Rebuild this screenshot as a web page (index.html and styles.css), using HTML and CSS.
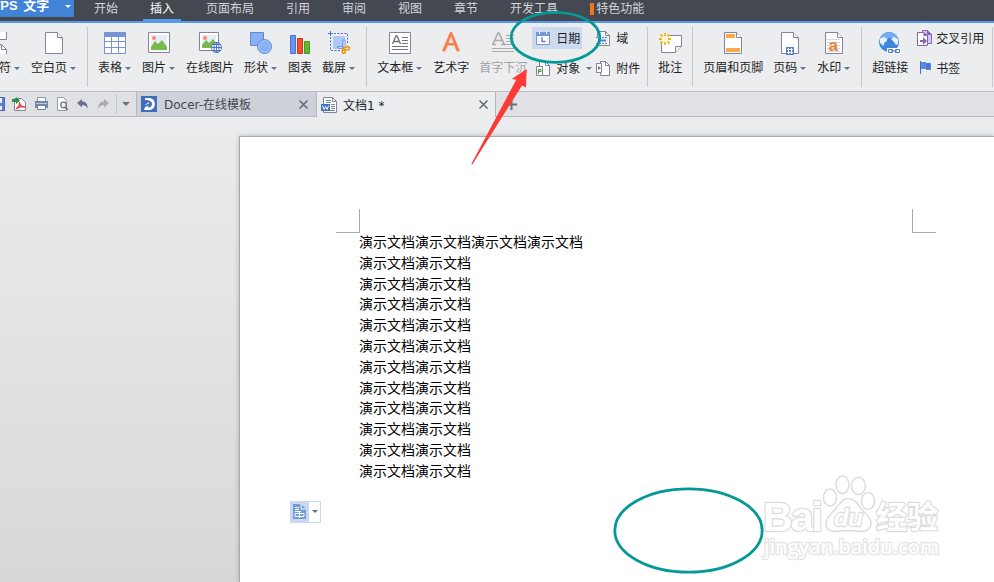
FILE: index.html
```html
<!DOCTYPE html>
<html lang="zh-CN">
<head>
  <meta charset="utf-8">
  <title>文档1 - WPS 文字</title>
  <link rel="stylesheet" href="styles.css">
</head>
<body>
<nav class="menu">
  <div class="app">WPS 文字<i class="caret"></i></div>
  <a>开始</a>
  <a class="active">插入</a>
  <a>页面布局</a>
  <a>引用</a>
  <a>审阅</a>
  <a>视图</a>
  <a>章节</a>
  <a>开发工具</a>
  <a class="special">特色功能</a>
</nav>

<div class="ribbon">
  <div class="btn">
    <svg width="22" height="22"><path d="M2.500 0v7.500h17V0M2.500 22V12.500h12l5 5V22" fill="#fff" stroke="#85829a"/><path d="M14.500 12.500v5h5" fill="none" stroke="#85829a"/></svg>
    <span>分隔符<i class="caret"></i></span>
  </div>
  <div class="btn">
    <svg width="18" height="22"><path d="M.5.5h12l5 5v16H.5z" fill="#fff" stroke="#85829a"/><path d="M12 1l5 9V6z" fill="#dfe5f6"/><path d="M12.500.5v5h5" fill="#fff" stroke="#85829a"/></svg>
    <span>空白页<i class="caret"></i></span>
  </div>
  <div class="sep"></div>
  <div class="btn">
    <svg width="22" height="22"><path d="M0 0h22v22H0z" fill="#7894d6"/><path d="M1 5h6v4H1zM8 5h6v4H8zM15 5h6v4h-6zM1 10h6v5H1zM8 10h6v5H8zM15 10h6v5h-6zM1 16h6v5H1zM8 16h6v5H8zM15 16h6v5h-6z" fill="#fff"/></svg>
    <span>表格<i class="caret"></i></span>
  </div>
  <div class="btn">
    <svg width="22" height="22"><path d="M.5.5h21v20H.5z" fill="#fff" stroke="#85829a"/><path d="M3 3h16v15H3z" fill="#e5edfb"/><circle cx="6" cy="6" r="2" fill="#fb8a62"/><path d="M3 18v-3l4-6 3 3 4-4 5 7v3z" fill="#76ba4c"/></svg>
    <span>图片<i class="caret"></i></span>
  </div>
  <div class="btn">
    <svg width="23" height="22"><path d="M.5.5h19v18H.5z" fill="#fff" stroke="#85829a"/><path d="M3 3h14v13H3z" fill="#e5edfb"/><circle cx="6" cy="6" r="2" fill="#fb8a62"/><path d="M3 16v-3l4-5 3 3 4-4 3 4v5z" fill="#76ba4c"/><circle cx="17.500" cy="15.500" r="5" fill="#fff" stroke="#4a74bf"/><path d="M12.500 15.500h10M17.500 10.500v10M13.500 12.500h8M13.500 18.500h8" stroke="#4a74bf"/><ellipse cx="17.500" cy="15.500" rx="2.500" ry="5" fill="none" stroke="#4a74bf"/></svg>
    <span>在线图片</span>
  </div>
  <div class="btn">
    <svg width="22" height="22"><path d="M.5.5h13v13H.5z" fill="#89b1f5" stroke="#5f87d2"/><circle cx="14.500" cy="14.500" r="7" fill="#89b1f5" stroke="#5f87d2"/><circle cx="14.500" cy="14.500" r="5.800" fill="none" stroke="#a9c7f9"/></svg>
    <span>形状<i class="caret"></i></span>
  </div>
  <div class="btn">
    <svg width="20" height="22"><path d="M.5 3.500h5v18h-5z" fill="#6896ef" stroke="#4b73cf"/><path d="M7.500 6.500h5v15h-5z" fill="#f3512c" stroke="#cd3717"/><path d="M14.500 9.500h5v12h-5z" fill="#5cbb2f" stroke="#429a1d"/></svg>
    <span>图表</span>
  </div>
  <div class="btn">
    <svg width="22" height="22"><path d="M5 4h12v13H5z" fill="#b0c8fb"/><path d="M2.500 5v13.500H12M6 1.500h13.500V12" fill="none" stroke="#4770c8" stroke-dasharray="2 1.500"/><path d="M0 1.500h5M2.500-1v5" stroke="#4770c8"/><path d="M15 8h2v8h-2zM9 15l6-.5 1 1.500-5 .5z" fill="#fff" stroke="#4a76d0" stroke-width=".8"/><path d="M15.500 16.500l4-2 2 1-.5 2-4.500.500zM15 17.500l2 1v2.500l-2 .5-1-2z" fill="#fff3d6" stroke="#e8930f" stroke-width="1.500"/></svg>
    <span>截屏<i class="caret"></i></span>
  </div>
  <div class="sep"></div>
  <div class="btn">
    <svg width="22" height="22"><path d="M.5.5h21v21H.5z" fill="#fff" stroke="#85829a"/><path d="M3.500 12L7 4h1l3.500 8M5 9.500h5" fill="none" stroke="#707070" stroke-width="1.300"/><path d="M13 5.500h6M13 8.500h6M13 11.500h6M3 14.500h16M3 17.500h16" stroke="#777"/></svg>
    <span>文本框<i class="caret"></i></span>
  </div>
  <div class="btn">
    <svg width="18" height="22"><path d="M0 19L8 0h2l8 19h-3.500l-2.200-5.500H5.700L3.500 19zm6.600-8h4.800L9 4.500z" fill="#fb7f4d" fill-rule="evenodd"/><path d="M0 19h3.500l1 2H2zM14.500 19H18l-2 2h-2.500z" fill="#fcd5c5"/></svg>
    <span>艺术字</span>
  </div>
  <div class="btn disabled">
    <svg width="22" height="22"><path d="M1 12L6 1h1l5 11M3 8.500h7M0 12.500h4M9 12.500h5" fill="none" stroke="#aaa" stroke-width="1.600"/><path d="M14 3.500h8M14 6.500h8M14 9.500h8M14 12.500h8M0 16.500h22M0 19.500h22" stroke="#aaa"/></svg>
    <span>首字下沉</span>
  </div>
  <div class="stack objects">
    <div class="row hot">
      <svg width="14" height="15"><path d="M.5 2.500h13v11H.5z" fill="#fff" stroke="#7895d9"/><path d="M0 1h14v4H0z" fill="#7895d9"/><path d="M3.500 0v3M10.500 0v3" stroke="#fff"/><path d="M6 6v4.500h3.500" fill="none" stroke="#5a7bc6" stroke-width="1.300"/><path d="M2 7.500h1M2 10.500h1M11 7.500h1M11 10.500h1" stroke="#b5c5ea"/></svg>
      日期
    </div>
    <div class="row">
      <svg width="14" height="15"><path d="M3.500.5h6l4 4v10h-10z" fill="#fff" stroke="#85829a"/><path d="M9.500.5v4h4" fill="none" stroke="#85829a"/><path d="M.5 5.500h6v9h-6z" fill="#fff" stroke="#85829a"/><path d="M2.500 13V8.500H5v2H3" fill="none" stroke="#3a9d28"/></svg>
      对象<i class="caret"></i>
    </div>
  </div>
  <div class="stack">
    <div class="row">
      <svg width="14" height="15"><path d="M1.500.5h8l4 4v10h-12z" fill="#fff" stroke="#85829a"/><path d="M9.500.5v4h4" fill="none" stroke="#85829a"/><path d="M0 6h12v6H0z" fill="#e8effd"/><path d="M0 6.500h12M0 12.500h12" stroke="#5a80d0" stroke-dasharray="2 1"/><path d="M2 9.500h8" stroke="#5a80d0" stroke-width="2"/></svg>
      域
    </div>
    <div class="row">
      <svg width="14" height="15"><path d="M4.500.5h5l4 4v10h-9z" fill="#fff" stroke="#85829a"/><path d="M9.500.5v4h4" fill="none" stroke="#85829a"/><path d="M.5 2.500h5v9h-5z" fill="#fff" stroke="#85829a"/><path d="M2 5v4l3-2z" fill="#77728d"/></svg>
      附件
    </div>
  </div>
  <div class="sep"></div>
  <div class="btn">
    <svg width="24" height="22"><path d="M3.500 3.500h20v11l-6 6h-14z" fill="#fff" stroke="#85829a"/><path d="M23.500 14.500h-6v6" fill="#f2f3f6" stroke="#85829a"/><circle cx="7" cy="7" r="5" fill="#fff8dc"/><path d="M7 1v3M7 10v3M1 7h3M10 7h3M2.500 2.500l2 2M9.500 9.500l2 2M11.500 2.500l-2 2M4.500 9.500l-2 2" stroke="#e9b71c" stroke-width="1.800"/></svg>
    <span>批注</span>
  </div>
  <div class="sep"></div>
  <div class="btn">
    <svg width="18" height="22"><path d="M.5.5h12l5 5v16H.5z" fill="#fff" stroke="#85829a"/><path d="M12.500.5v5h5" fill="#fff" stroke="#85829a"/><path d="M2 2h9v4H2zM2 16h14v4H2z" fill="#f8a94a"/></svg>
    <span>页眉和页脚</span>
  </div>
  <div class="btn">
    <svg width="18" height="22"><path d="M.5.5h12l5 5v16H.5z" fill="#fff" stroke="#85829a"/><path d="M12 1l5 9V6z" fill="#dfe5f6"/><path d="M12.500.5v5h5" fill="#fff" stroke="#85829a"/><path d="M5 15h8v8H5z" fill="#547ed8"/><path d="M7.500 16v6M10.500 16v6M6 17.500h6M6 20.500h6" stroke="#fff"/></svg>
    <span>页码<i class="caret"></i></span>
  </div>
  <div class="btn">
    <svg width="18" height="22"><path d="M.5.5h12l5 5v16H.5z" fill="#fff" stroke="#85829a"/><path d="M12.500.5v5h5" fill="#fff" stroke="#85829a"/><path d="M2 7.500h13M2 10.500h13M2 13.500h13M2 16.500h13M2 19.500h13" stroke="#d5dae8"/><text class="mark" x="3.500" y="19">a</text></svg>
    <span>水印<i class="caret"></i></span>
  </div>
  <div class="sep"></div>
  <div class="btn">
    <svg width="22" height="22"><circle cx="10" cy="10" r="10" fill="#3d86dc"/><path d="M1 6a10 10 0 0 1 18 0z" fill="#76aaf0"/><path d="M1 6.500l4-1.500 3.500 1.500-1 3-2 1-1 3.500-3.500-3zM12 7l3-2 4 2v5l-2 1-2-3z" fill="#e5f1fb"/><path d="M9.500 17.500h4v3h-4zM16.500 17.500h4v3h-4zM12 19h6" fill="#fff" stroke="#fff" stroke-width="3"/><path d="M9.500 17.500h4v3h-4zM16.500 17.500h4v3h-4zM12 19h6" fill="#fff" stroke="#4478c6"/></svg>
    <span>超链接</span>
  </div>
  <div class="stack refs">
    <div class="row">
      <svg width="16" height="16"><path d="M5.500.5h5l4 4v9h-9z" fill="#d7c8f0" stroke="#8563b5"/><path d="M10 0v5h5z" fill="#8563b5"/><path d="M.5 2.500h6l4 3v10H.5z" fill="#fff" stroke="#8563b5"/><path d="M6.500 2v4h4zM3 10h3V7l4 4-4 4v-3H3z" fill="#8563b5"/></svg>
      交叉引用
    </div>
    <div class="row">
      <svg width="16" height="16"><path d="M3.500 1v13" stroke="#456fc4"/><path d="M4 2h5v1h5v7H9V9H4z" fill="#5d8ae0"/><path d="M9 3h4v6H9z" fill="#4877d3"/></svg>
      书签
    </div>
  </div>
  <div class="sep"></div>
</div>

<div class="tabs">
  <div class="quick">
    <svg class="save" width="13" height="14"><path d="M.5.5h12v13H.5z" fill="#5c82d4" stroke="#4268b8"/><path d="M3 1h7v5H3zM4 9h6v4H4z" fill="#e8effb"/></svg>
    <svg width="15" height="15"><path d="M2.500 1.500h7l4 4v8h-11z" fill="#fff" stroke="#85829a"/><path d="M0 2h4V0l4 3.500L4 7V5H0z" fill="#249147"/><path d="M4 12c3-2 4-4 3.500-7 0 3 2 5 5.500 5-4-1-6 0-9 2z" fill="none" stroke="#e23e38" stroke-width="1.300"/></svg>
    <svg width="13" height="14"><path d="M2.500.5h8v4h-8z" fill="#fff" stroke="#8896ad"/><path d="M0 4h13v7H0z" fill="#7187ae"/><path d="M1 6.500h11" stroke="#b9c7df"/><path d="M2.500 8.500h8v4h-8z" fill="#fff" stroke="#7285a8"/></svg>
    <svg width="13" height="14"><path d="M1.500.5h6l3 3v10h-9z" fill="#fff" stroke="#9a98a8"/><circle cx="7.500" cy="8" r="2.800" fill="#eef2f8" stroke="#6f7688" stroke-width="1.300"/><path d="M9.500 10.500l2 2.500" stroke="#6f7688" stroke-width="2"/></svg>
    <svg width="11" height="11"><path d="M0 4l5-4v2.500c4 0 6 2.500 5.500 7.500C9.500 7 8 6 5 6v2.500z" fill="#66738d"/></svg>
    <svg class="redo" width="11" height="11"><path d="M11 4L6 0v2.500C2 2.500 0 5 .5 10 1.500 7 3 6 6 6v2.500z" fill="#a9acb3"/></svg>
  </div>
  <div class="more"><i class="caret"></i></div>
  <div class="tab">
    <svg width="16" height="16"><path d="M0 0h16v16H0z" fill="#3f6dbb"/><path d="M4 2h4.500a5.500 6 0 0 1 0 12H3l1-3 3-1 1.500-3-5 2.500L5 8l3-2-1 5.500c3 0 4-2 4-3.500 0-3-3-4-7-4z" fill="#fff"/></svg>
    <b>Docer-在线模板</b>
    <svg class="close" width="9" height="9"><path d="M.5.5l8 8M8.500.5l-8 8"/></svg>
  </div>
  <div class="tab current">
    <svg width="16" height="16"><path d="M2.500.5h9l4 4v11h-13z" fill="#fff" stroke="#85829a"/><path d="M11.500.5v4h4" fill="none" stroke="#85829a"/><path d="M5 3.500h5M5 5.500h5M10 7.500h4M10 9.500h4M10 11.500h4M5 13.500h9" stroke="#7486aa"/><path d="M0 7h9v7H0z" fill="#3f72c4"/><path d="M1.500 8.500l1.500 4 1.500-3 1.500 3 1.500-4" fill="none" stroke="#fff"/></svg>
    <b>文档1 *</b>
    <svg class="close" width="9" height="9"><path d="M.5.5l8 8M8.500.5l-8 8"/></svg>
  </div>
  <svg class="add" width="11" height="11"><path d="M0 5.500h11M5.500 0v11" stroke="#66707f" stroke-width="2"/></svg>
</div>

<main class="workspace">
  <section class="page">
    <div class="corners"><i class="corner left"></i><i class="corner right"></i></div>
    <div class="text">
      <p>演示文档演示文档演示文档演示文档</p>
      <p>演示文档演示文档</p>
      <p>演示文档演示文档</p>
      <p>演示文档演示文档</p>
      <p>演示文档演示文档</p>
      <p>演示文档演示文档</p>
      <p>演示文档演示文档</p>
      <p>演示文档演示文档</p>
      <p>演示文档演示文档</p>
      <p>演示文档演示文档</p>
      <p>演示文档演示文档</p>
      <p>演示文档演示文档</p>
    </div>
    <div class="paste">
      <div><svg width="13" height="15"><path d="M0 0h8l5 5v10H0z" fill="#729bd8"/><path d="M8 0v5h5M2 3.500h4M2 5.500h4M2 7.500h6M2 9.500h9v3H2zM6.500 8v6" fill="none" stroke="#fff"/></svg></div>
      <i class="caret"></i>
    </div>
  </section>
</main>

<!-- marks drawn over the window -->
<svg class="overlay" width="994" height="582">
  <ellipse class="ring" cx="555.500" cy="37.300" rx="44.300" ry="25"/>
  <ellipse class="ring" cx="688.500" cy="530.500" rx="73.700" ry="41.700"/>
  <path d="M526.700 69l-15 10 4.500.8L471.300 164l1 .6L522 85.500l4 2z" fill="#fd3a36"/>
  <g class="watermark">
    <ellipse cx="830" cy="497.500" rx="6.500" ry="8.500"/>
    <ellipse cx="842.500" cy="484.800" rx="6.500" ry="8.800"/>
    <ellipse cx="858.500" cy="486" rx="7" ry="8.500"/>
    <ellipse cx="868" cy="501" rx="6.500" ry="8.500"/>
    <path d="M848 498.500c7 0 10 6 13 10 4 5 10 8 10 15 0 6-4 8-10 8-5 0-8-1-13-1s-8 1-13 1c-6 0-9-3-9-8 0-7 6-10 10-15 3-4 6-10 12-10z"/>
    <text class="brand" x="763" y="531" textLength="60">Bai</text>
    <text class="du" x="834" y="526" textLength="29">du</text>
    <text class="cn" x="876" y="528" textLength="62">经验</text>
    <text class="url" x="764" y="554" textLength="175">jingyan.baidu.com</text>
  </g>
</svg>
</body>
</html>
```

FILE: styles.css
```css
* {
    box-sizing: border-box;
}

body {
    display: flex;
    flex-direction: column;
    height: 582px;
    margin: 0;
    overflow: hidden;
    color: #1c1f24;
    font: 12px/16px "Liberation Sans", "Noto Sans CJK SC", sans-serif;
}

svg {
    flex: none;
    overflow: visible;
}

.caret {
    flex: none;
    width: 0;
    height: 0;
    border: 3px solid transparent;
    border-top-color: #66718c;
    border-bottom: 0;
}

/* menu */

.menu {
    display: flex;
    flex: none;
    gap: 32px;
    height: 23px;
    overflow: hidden;
    background: #444850;
    border-bottom: 2px solid #559ae8;
}

.menu a {
    height: 21px;
    padding-top: 1px;
    color: #d3d6dc;
    white-space: nowrap;
}

.menu .active {
    color: #fff;
}

.menu .active::after {
    content: "";
    display: block;
    width: 38px;
    height: 2px;
    margin: 2px -7px 0;
    background: #559ae8;
}

.menu .special::before {
    content: "";
    display: inline-block;
    width: 4px;
    height: 12px;
    margin-right: 2px;
    vertical-align: -2px;
    background: #f47513;
}

.app {
    display: flex;
    justify-content: space-between;
    width: 74px;
    height: 17px;
    margin-right: -12px;
    padding-right: 3px;
    color: #fff;
    font-size: 13px;
    font-weight: bold;
    line-height: 12px;
    text-indent: -12px;
    white-space: pre;
    word-spacing: 2px;
    background: #4183d7;
}

.app .caret {
    margin-top: 5px;
    border-top-color: #fff;
}

/* ribbon */

.ribbon {
    display: flex;
    flex: none;
    gap: 10px;
    height: 69px;
    padding-top: 4px;
    background: #ecedef;
    border-bottom: 1px solid #b9bcc5;
}

.btn {
    display: flex;
    flex: none;
    flex-direction: column;
    align-items: center;
    padding-top: 5px;
    white-space: nowrap;
}

.btn:first-child {
    margin-left: -25px;
}

.btn svg {
    height: 22px;
    margin-bottom: 6px;
}

.btn span, .row {
    display: flex;
    align-items: center;
}

.btn .caret {
    margin: 0 1px 0 3px;
}

.disabled {
    color: #a0a2a5;
}

.sep {
    flex: none;
    width: 1px;
    height: 60px;
    background: #c6c8ce;
}

.stack {
    display: flex;
    flex: none;
    flex-direction: column;
    gap: 8px;
    margin-left: -2px;
    white-space: nowrap;
}

.row {
    height: 22px;
    gap: 6px;
    padding-top: 1px;
}

.row svg {
    margin-top: -1px;
}

.objects {
    width: 56px;
    margin-left: -5px;
}

.objects .row {
    width: 50px;
    padding-left: 4px;
}

.stack + .sep {
    margin-left: -3px;
}

.hot {
    background: #cdd9ee;
}

.refs {
    margin-left: -1px;
}

.refs .row {
    gap: 3px;
}

.refs + .sep {
    margin-left: -2px;
}

.mark {
    fill: #f0802e;
    font: bold 17px "Liberation Sans", sans-serif;
}

/* quick access and document tabs */

.tabs {
    display: flex;
    flex: none;
    align-items: center;
    height: 25px;
    background: #dfe1e5;
    border-bottom: 1px solid #b9bcc5;
}

.quick {
    display: flex;
    align-items: center;
    gap: 8px;
    width: 116px;
}

.save {
    margin-left: -8px;
    margin-right: -1px;
}

.redo {
    margin-left: 2px;
}

.more {
    width: 20px;
    height: 20px;
    padding: 8px 5px;
    border-left: 1px solid #c3c6cd;
}

.more .caret {
    display: block;
    border-width: 4px 4px 0;
}

.tab {
    display: flex;
    align-items: center;
    gap: 7px;
    width: 181px;
    height: 24px;
    padding: 0 8px 0 4px;
    color: #43474f;
    background: #ced1d9;
    border-left: 1px solid #b4b8c2;
    border-right: 1px solid #b4b8c2;
}

.tab b {
    padding-top: 2px;
    font-family: "DejaVu Sans", "Noto Sans CJK SC", sans-serif;
    font-weight: normal;
}

.current {
    height: 25px;
    width: 179px;
    margin-bottom: -1px;
    padding-right: 7px;
    color: #22262d;
    background: #ecedef;
    border-left: 0;
}

.current b {
    margin-left: -1px;
}

.close {
    margin-left: auto;
    fill: none;
    stroke: #5b687f;
    stroke-width: 1.5;
}

.add {
    margin-left: 10px;
}

/* document */

.workspace {
    display: flex;
    flex: 1;
    padding: 19px 0 0 239px;
    background: linear-gradient(#ebecee, #d8d8da);
}

.page {
    flex: 1;
    padding-top: 72px;
    background: #fff;
    border: 1px solid #a8a9ad;
    border-width: 1px 0 0 1px;
    box-shadow: 0 0 5px rgb(0 0 0 / 22%);
}

.corners {
    display: flex;
    justify-content: space-between;
    padding: 0 58px 0 96px;
}

.corner {
    width: 24px;
    height: 24px;
    border: 0 solid #a9a9a9;
    border-bottom-width: 1px;
}

.corner.left {
    border-right-width: 1px;
}

.corner.right {
    border-left-width: 1px;
}

.text {
    margin-top: -1px;
    padding-left: 119px;
    color: #000;
    font-size: 14px;
    line-height: 20.8px;
}

.text p {
    margin: 0;
}

.paste {
    display: flex;
    align-items: center;
    width: 31px;
    height: 22px;
    margin: 19px 0 0 50px;
    border: 1px solid #cad7ed;
}

.paste div {
    width: 18px;
    height: 20px;
    margin-right: 3px;
    padding: 2px;
    background: #cad7ed;
}

/* overlay */

.overlay {
    position: absolute;
    top: 0;
    left: 0;
}

.ring {
    fill: none;
    stroke: #059996;
    stroke-width: 2.8;
}

.watermark {
    fill: #fff;
    stroke: #dcdcdc;
    stroke-width: 1.5;
}

.watermark text {
    font-family: "Liberation Sans", "Noto Sans CJK SC", sans-serif;
    font-weight: bold;
    paint-order: stroke;
    stroke-width: 2.4;
    stroke-linejoin: round;
}

.watermark .brand {
    font-size: 41px;
}

.watermark .du {
    font-size: 24px;
    font-style: italic;
}

.watermark .cn {
    font-size: 31px;
}

.watermark .url {
    font-family: "Open Sans", sans-serif;
    font-size: 20px;
    font-weight: 600;
    stroke: #e4e4e4;
}
```
